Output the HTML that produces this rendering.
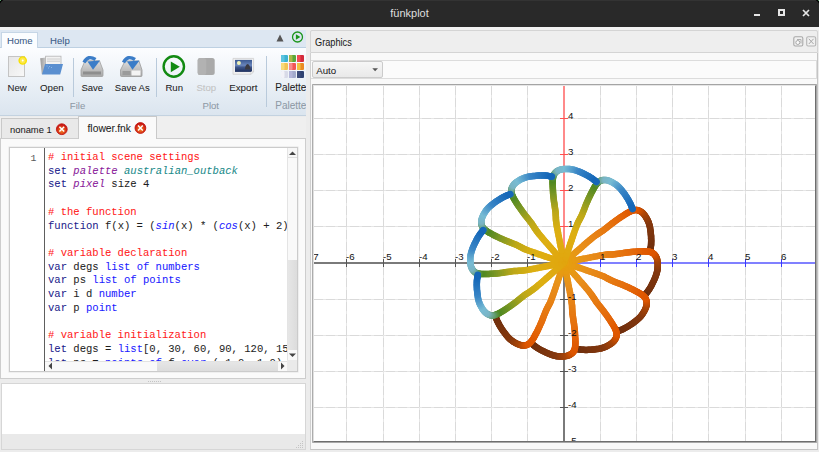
<!DOCTYPE html>
<html><head><meta charset="utf-8">
<style>
*{margin:0;padding:0;box-sizing:border-box}
html,body{width:819px;height:452px;overflow:hidden;background:#ececec;font-family:"Liberation Sans",sans-serif;position:relative}
.a{position:absolute}
.lbl{position:absolute;font-size:9.4px;color:#1c1c1c;-webkit-text-stroke:0.05px currentColor;line-height:11px;white-space:nowrap;transform-origin:0 0}
.code{position:absolute;font-family:"Liberation Mono",monospace;font-size:10.55px;line-height:13.7px;white-space:pre;color:#1e1e1e;-webkit-text-stroke:0.05px currentColor}
.c{color:#ff1a1a}.k{color:#1c1c8c}.i{font-style:italic;color:#8a1a9a}.t{font-style:italic;color:#1a8a8a}.b{color:#1a1aff}.bi{color:#1a1aff;font-style:italic}
</style></head><body>
<!-- title bar -->
<div class="a" style="left:0;top:0;width:819px;height:27px;background:#292929;border-top:1px solid #333"></div>
<svg class="a" style="left:0;top:0" width="4" height="4"><path d="M0 0H3.5Q1 1 0 3.5Z" fill="#000"/><rect width="1" height="1" fill="#5a9a6a"/></svg>
<svg class="a" style="left:815px;top:0" width="4" height="4"><path d="M4 0H0.5Q3 1 4 3.5Z" fill="#000"/><rect x="3" width="1" height="1" fill="#5a9a6a"/></svg>
<div class="a" style="left:0;top:7px;width:819px;text-align:center;color:#dfdfdf;font-size:11px;line-height:13px">fünkplot</div>
<div class="a" style="left:754px;top:14px;width:6px;height:2px;background:#e6e6e6"></div>
<div class="a" style="left:778px;top:9px;width:7px;height:7px;border:2px solid #e6e6e6"></div>
<svg class="a" style="left:802px;top:9px" width="8" height="8"><path d="M1 1L7 7M7 1L1 7" stroke="#e6e6e6" stroke-width="1.7"/></svg>
<div class="a" style="left:0;top:27px;width:819px;height:3px;background:#f2f2f2"></div>

<!-- ribbon -->
<div class="a" style="left:0;top:30px;width:306px;height:18px;background:#dde7f2;border-bottom:1px solid #bdd0e2"></div>
<div class="a" style="left:1px;top:32px;width:37px;height:16px;background:#fbfdff;border:1px solid #c6d6e6;border-bottom:none"></div>
<div class="lbl" style="left:7px;top:35px;color:#3a5a85;font-size:9.6px">Home</div>
<div class="lbl" style="left:50px;top:35px;color:#3a5a85;font-size:9.6px">Help</div>
<svg class="a" style="left:276px;top:34px" width="8" height="8"><path d="M4 0.5L7.5 7.5H0.5Z" fill="#555"/></svg>
<svg class="a" style="left:291px;top:31px" width="13" height="13"><circle cx="6.5" cy="6" r="5" fill="none" stroke="#1c961c" stroke-width="1.3"/><path d="M4.9 3.3L9.4 6L4.9 8.7Z" fill="#1c961c"/></svg>
<div class="a" style="left:0;top:48px;width:306px;height:68px;background:linear-gradient(#fcfdff 0%,#eef3f8 40%,#dbe5ef 100%);border-bottom:1px solid #c3d2e0"></div>
<!-- separators -->
<div class="a" style="left:73px;top:58px;width:1px;height:39px;background:#b9cadb"></div>
<div class="a" style="left:156px;top:58px;width:1px;height:39px;background:#b9cadb"></div>
<div class="a" style="left:266px;top:56px;width:1px;height:51px;background:#b9cadb"></div>
<!-- icons -->
<svg class="a" style="left:0;top:50px" width="306" height="32">
 <defs>
  <linearGradient id="pg" x1="0" y1="0" x2="1" y2="1"><stop offset="0" stop-color="#e6e6e6"/><stop offset="1" stop-color="#f8f8f8"/></linearGradient>
  <linearGradient id="dg" x1="0" y1="0" x2="0" y2="1"><stop offset="0" stop-color="#dcdcdc"/><stop offset="1" stop-color="#a8a8a8"/></linearGradient>
 </defs>
 <!-- New -->
 <rect x="8.5" y="6.5" width="16" height="20" fill="url(#pg)" stroke="#c4c4c4"/>
 <circle cx="22.7" cy="10.5" r="3.6" fill="#fde84a" stroke="#f6e000" stroke-width="1.4"/>
 <circle cx="22.7" cy="10.5" r="1" fill="#fff"/>
 <!-- Open -->
 <linearGradient id="og" x1="0" y1="0" x2="1" y2="0"><stop offset="0" stop-color="#9a9a9a"/><stop offset="1" stop-color="#d0d0d0"/></linearGradient>
 <path d="M40.2 8.2L46 7.5V23L41.8 24.2Z" fill="url(#og)"/>
 <rect x="45.6" y="6.2" width="15.4" height="9" fill="#f2f2f2" stroke="#b4b4b4" stroke-width="0.8"/>
 <path d="M47 9H60M47 11.2H60" stroke="#c4c4c4" stroke-width="0.8"/>
 <path d="M45 14H63L60.2 24.4H42Z" fill="#5a8fd0"/>
 <g fill="#8cb6e8"><rect x="46.5" y="15.5" width="1" height="1"/><rect x="49" y="16" width="1" height="1"/><rect x="48" y="17.5" width="1" height="1"/><rect x="51" y="17" width="1" height="1"/></g>
 <!-- Save -->
 <path d="M81 20L85 10.8H99.5L103 20V25.5Q103 26.5 102 26.5H82Q81 26.5 81 25.5Z" fill="url(#dg)" stroke="#a0a0a0" stroke-width="0.8"/>
 <rect x="83" y="21.5" width="18" height="3" fill="#8e8e8e"/>
 <path d="M84 12.5Q88 4.5 95.5 9.5" fill="none" stroke="#3b7dc8" stroke-width="3.4"/><path d="M87.5 11.5L100 10.5L93 19.8Z" fill="#3b7dc8"/>
 <!-- Save As -->
 <path d="M120.5 20L125 11H139L142 20V25.5Q142 26.5 141 26.5H121.5Q120.5 26.5 120.5 25.5Z" fill="url(#dg)" stroke="#9a9a9a" stroke-width="0.8"/>
 <rect x="122.5" y="21" width="8" height="4" fill="#9a9a9a"/>
 <rect x="131.5" y="20.5" width="9" height="5" fill="#f4f4f4"/>
 <path d="M123.5 12.5Q127.5 4.5 135 9.5" fill="none" stroke="#3b7dc8" stroke-width="3.4"/><path d="M127 11.5L139.5 10.5L132.5 19.8Z" fill="#3b7dc8"/>
 <!-- Run -->
 <circle cx="173.8" cy="16.5" r="10.2" fill="none" stroke="#128a12" stroke-width="2.4"/>
 <path d="M170.8 11.4L179.8 16.8L170.8 22.2Z" fill="#128a12"/>
 <!-- Stop -->
 <rect x="197.7" y="8" width="17" height="17" rx="2.5" fill="#a9a9a9"/>
 <rect x="197.7" y="8" width="8.5" height="17" rx="2.5" fill="#b2b2b2"/>
 <!-- Export -->
 <linearGradient id="eg" x1="0" y1="0" x2="0" y2="1"><stop offset="0" stop-color="#3a5890"/><stop offset="0.45" stop-color="#6a86bc"/><stop offset="0.62" stop-color="#3c5488"/><stop offset="1" stop-color="#1c2e5c"/></linearGradient>
 <path d="M233 8.4H253.6V22L251 24.3H233Z" fill="#f0f0f0" stroke="#cfcfcf" stroke-width="0.8"/>
 <rect x="235" y="9.9" width="17" height="12" fill="url(#eg)"/>
 <circle cx="238.9" cy="13" r="2" fill="#eef2b8"/>
 <path d="M245 19.5Q245 15 247.5 14Q250 14.5 250.5 19.5Z" fill="#3a3a42"/>
 <path d="M250 24.5L253.8 21.5L251 21.8Z" fill="#fff" stroke="#c8c8c8" stroke-width="0.5"/>
 <!-- Palette -->
 <g><rect x="281" y="5" width="7" height="7" rx="1" fill="#3ab2d2"/><rect x="281.0" y="5" width="3.5" height="7" rx="1" fill="#5cc4e0"/><rect x="289" y="5" width="7" height="7" rx="1" fill="#5aa83a"/><rect x="289.0" y="5" width="3.5" height="7" rx="1" fill="#a8b848"/><rect x="297" y="5" width="7" height="7" rx="1" fill="#d42a3c"/><rect x="297.0" y="5" width="3.5" height="7" rx="1" fill="#f24a52"/><rect x="281" y="13" width="7" height="7" rx="1" fill="#f2c455"/><rect x="281.0" y="13" width="3.5" height="7" rx="1" fill="#f8da7a"/><rect x="289" y="13" width="7" height="7" rx="1" fill="#f25656"/><rect x="289.0" y="13" width="3.5" height="7" rx="1" fill="#f98a8c"/><rect x="297" y="13" width="7" height="7" rx="1" fill="#ea8a22"/><rect x="297.0" y="13" width="3.5" height="7" rx="1" fill="#f2c242"/><rect x="281" y="21" width="7" height="7" rx="1" fill="#d8dae8"/><rect x="281.0" y="21" width="3.5" height="7" rx="1" fill="#f2f2f8"/><rect x="289" y="21" width="7" height="7" rx="1" fill="#a2aacc"/><rect x="289.0" y="21" width="3.5" height="7" rx="1" fill="#b4b6da"/><rect x="297" y="21" width="7" height="7" rx="1" fill="#304272"/><rect x="297.0" y="21" width="3.5" height="7" rx="1" fill="#3c4c7a"/></g>
</svg>
<!-- labels -->
<div class="lbl" style="left:7.5px;top:81.6px;font-size:9.6px">New</div>
<div class="lbl" style="left:40px;top:81.6px;font-size:9.7px">Open</div>
<div class="lbl" style="left:81.5px;top:81.6px;font-size:9.5px">Save</div>
<div class="lbl" style="left:114.8px;top:81.6px;font-size:9.5px">Save As</div>
<div class="lbl" style="left:165.4px;top:81.6px;font-size:9.6px">Run</div>
<div class="lbl" style="left:196.4px;top:81.6px;font-size:9.6px;color:#c2c2c2">Stop</div>
<div class="lbl" style="left:229.2px;top:81.6px;font-size:9.8px">Export</div>
<div class="lbl" style="left:275.3px;top:81.6px;font-size:10px">Palette</div>
<div class="lbl" style="left:69.8px;top:99.8px;font-size:9.6px;color:#8e99a5">File</div>
<div class="lbl" style="left:202.5px;top:99.8px;font-size:9.6px;color:#8e99a5">Plot</div>
<div class="lbl" style="left:275.3px;top:99.8px;font-size:10px;color:#8e99a5">Palette</div>
<div class="a" style="left:306px;top:30px;width:4px;height:90px;background:#ececec"></div>

<!-- editor tabs -->
<div class="a" style="left:0;top:117px;width:306px;height:22px;background:#efefef"></div>
<div class="a" style="left:1px;top:118px;width:78px;height:21px;background:#e9e9e9;border:1px solid #c9c9c9;border-bottom:none"></div>
<div class="a" style="left:0;top:138px;width:306px;height:241px;background:#fafafa;border:1px solid #cdcdcd"></div>
<div class="a" style="left:78px;top:116px;width:79px;height:23px;background:#fafafa;border:1px solid #c9c9c9;border-bottom:none"></div>
<div class="lbl" style="left:10px;top:124px">noname 1</div>
<div class="lbl" style="left:87.5px;top:122.6px;font-size:10.3px">flower.fnk</div>
<svg class="a" style="left:55px;top:123px" width="13" height="13"><defs><radialGradient id="xg" cx="0.5" cy="0.6" r="0.5"><stop offset="0" stop-color="#f48a2a"/><stop offset="0.6" stop-color="#e04a18"/><stop offset="1" stop-color="#c81414"/></radialGradient></defs><circle cx="6.8" cy="6.2" r="5.4" fill="url(#xg)" stroke="#c21a12" stroke-width="0.9"/><path d="M4.4 3.8L9.2 8.6M9.2 3.8L4.4 8.6" stroke="#fff" stroke-width="1.4"/></svg>
<svg class="a" style="left:134px;top:122px" width="13" height="13"><circle cx="6.4" cy="6" r="5.4" fill="url(#xg)" stroke="#c21a12" stroke-width="0.9"/><path d="M4 3.6L8.8 8.4M8.8 3.6L4 8.4" stroke="#fff" stroke-width="1.4"/></svg>

<!-- editor -->
<div class="a" style="left:9px;top:147px;width:289px;height:225px;background:#fff;border:1px solid #cbcbcb;box-shadow:0 0 0 0.5px #e4e4e4"></div>
<div class="a" style="left:44px;top:148px;width:1px;height:223px;background:#5e5e5e"></div>
<div class="code" style="left:30.6px;top:152px;color:#5a5a5a;-webkit-text-stroke:0;font-size:9.8px">1</div>
<div class="a" style="left:45px;top:148px;width:242px;height:213px;overflow:hidden">
<div class="code" style="left:3px;top:3px"><span class="c"># initial scene settings</span>
<span class="k">set</span> <span class="i">palette</span> <span class="t">australian_outback</span>
<span class="k">set</span> <span class="i">pixel</span> size 4

<span class="c"># the function</span>
<span class="k">function</span> f(x) = (<span class="bi">sin</span>(x) * (<span class="bi">cos</span>(x) + 2)) * 2

<span class="c"># variable declaration</span>
<span class="k">var</span> degs <span class="b">list of numbers</span>
<span class="k">var</span> ps <span class="b">list of points</span>
<span class="k">var</span> i d <span class="b">number</span>
<span class="k">var</span> p <span class="b">point</span>

<span class="c"># variable initialization</span>
<span class="k">let</span> degs = <span class="b">list</span>[0, 30, 60, 90, 120, 150, 180]
<span class="k">let</span> ps = <span class="b">points of</span> f <span class="b">over</span> (-1.0, 1.0)
</div></div>
<!-- v scrollbar -->
<div class="a" style="left:287px;top:148px;width:10px;height:212px;background:#f9f9f9;border-left:1px solid #e4e4e4"></div>
<div class="a" style="left:288px;top:148px;width:9px;height:10px;background:#f6f6f6;border-bottom:1px solid #dedede"></div>
<svg class="a" style="left:288px;top:150px" width="9" height="6"><path d="M1 5L4.5 1.5L8 5Z" fill="#444"/></svg>
<div class="a" style="left:288px;top:260px;width:9px;height:90px;background:linear-gradient(90deg,#e6e6e6,#dcdcdc)"></div>
<svg class="a" style="left:288px;top:352px" width="9" height="6"><path d="M1 1.5L4.5 5L8 1.5Z" fill="#444"/></svg>
<!-- h scrollbar -->
<div class="a" style="left:45px;top:361px;width:242px;height:10px;background:#f9f9f9;border-top:1px solid #e2e2e2"></div>
<div class="a" style="left:157px;top:362px;width:121px;height:9px;background:linear-gradient(#e6e6e6,#dcdcdc)"></div>
<svg class="a" style="left:46px;top:361px" width="8" height="10"><path d="M6 1.5L2.5 5L6 8.5Z" fill="#444"/></svg>
<svg class="a" style="left:279px;top:361px" width="8" height="10"><path d="M2 1.5L5.5 5L2 8.5Z" fill="#444"/></svg>
<div class="a" style="left:287px;top:360px;width:10px;height:11px;background:#eaeaea"></div>

<!-- splitter / output -->
<div class="a" style="left:0;top:379px;width:306px;height:4px;background:#ececec"></div>
<div class="a" style="left:1px;top:383px;width:305px;height:51px;background:#fff;border:1px solid #d6d6d6;border-bottom:none"></div>
<div class="a" style="left:1px;top:434px;width:305px;height:16px;background:#e9e9e9;border:1px solid #d6d6d6;border-top:none"></div>
<svg class="a" style="left:296px;top:441px" width="9" height="8"><g fill="#c4c4c4"><rect x="6" y="0" width="1" height="1"/><rect x="4" y="2" width="1" height="1"/><rect x="6" y="2" width="1" height="1"/><rect x="2" y="4" width="1" height="1"/><rect x="4" y="4" width="1" height="1"/><rect x="6" y="4" width="1" height="1"/><rect x="0" y="6" width="1" height="1"/><rect x="2" y="6" width="1" height="1"/><rect x="4" y="6" width="1" height="1"/><rect x="6" y="6" width="1" height="1"/></g></svg>
<svg class="a" style="left:148px;top:381px" width="13" height="1"><g fill="#c4c4c4"><rect x="0" y="0" width="1" height="1"/><rect x="2" y="0" width="1" height="1"/><rect x="4" y="0" width="1" height="1"/><rect x="6" y="0" width="1" height="1"/><rect x="8" y="0" width="1" height="1"/><rect x="10" y="0" width="1" height="1"/><rect x="12" y="0" width="1" height="1"/></g></svg>

<!-- graphics dock -->
<div class="a" style="left:310px;top:30px;width:508px;height:23px;background:#eeeeee;border:1px solid #d4d4d4;border-radius:2px 2px 0 0"></div>
<div class="lbl" style="left:314.6px;top:37px;font-size:10px;transform:scaleX(0.92)">Graphics</div>
<svg class="a" style="left:792px;top:35px" width="26" height="13"><rect x="1.8" y="1.8" width="9" height="9.2" rx="1.5" fill="#f0f0f0" stroke="#a8a8a8" stroke-width="1.1"/><path d="M5 4.5H9V8.5" fill="none" stroke="#b0b0b0"/><circle cx="5.8" cy="7.5" r="2" fill="#fafafa" stroke="#a0a0a0" stroke-width="0.9"/><rect x="14.7" y="1.8" width="9" height="9.2" rx="1.5" fill="#f0f0f0" stroke="#b4b4b4" stroke-width="1.1"/><path d="M16.8 3.8L21.6 9M21.6 3.8L16.8 9" stroke="#a8a8a8" stroke-width="1"/></svg>
<div class="a" style="left:310px;top:53px;width:508px;height:397px;background:#f9f9f9;border-left:1px solid #d0d0d0;border-right:1px solid #c4c4c4;border-bottom:1px solid #c4c4c4"></div>
<div class="a" style="left:311px;top:60px;width:506px;height:19px;border:1px solid #dcdcdc;border-left:none;background:#fbfbfb;border-radius:0 1px 1px 0"></div>
<div class="a" style="left:312px;top:61px;width:71px;height:17px;background:linear-gradient(#f6f6f6,#e9e9e9);border:1px solid #cbcbcb;border-radius:2px"></div>
<div class="lbl" style="left:316.2px;top:65px;font-size:9.7px">Auto</div>
<svg class="a" style="left:372px;top:68px" width="7" height="4"><path d="M0.3 0.3H6L3.15 3.3Z" fill="#555"/></svg>
<div class="a" style="left:312px;top:84px;width:505px;height:359px;background:#fff;border-top:1px solid #a4a4a4;border-left:1px solid #acacac;border-right:1px solid #a8a8a8;border-bottom:1px solid #a8a8a8;border-radius:1px"></div>
<div class="a" style="left:313px;top:85px;width:503px;height:357px;background:#fff;border-top:1px solid #e6e6e6;border-left:1px solid #e0e0e0;border-right:1px solid #6e6e6e;border-bottom:1px solid #6e6e6e"></div>
<svg class="a" style="left:0;top:0" width="819" height="452"><defs><clipPath id="pc"><rect x="314" y="86" width="501" height="355"/></clipPath></defs><g clip-path="url(#pc)"><path d="M346.5 86V441M383.5 86V441M419.5 86V441M455.5 86V441M491.5 86V441M527.5 86V441M564.5 86V441M600.5 86V441M636.5 86V441M672.5 86V441M708.5 86V441M745.5 86V441M781.5 86V441M314 407.5H815M314 371.5H815M314 335.5H815M314 299.5H815M314 262.5H815M314 226.5H815M314 190.5H815M314 154.5H815M314 118.5H815" stroke="#e6e6e6" stroke-width="1" fill="none"/><path d="M346.5 86V441M383.5 86V441M419.5 86V441M455.5 86V441M491.5 86V441M527.5 86V441M564.5 86V441M600.5 86V441M636.5 86V441M672.5 86V441M708.5 86V441M745.5 86V441M781.5 86V441M314 407.5H815M314 371.5H815M314 335.5H815M314 299.5H815M314 262.5H815M314 226.5H815M314 190.5H815M314 154.5H815M314 118.5H815" stroke="#dadada" stroke-width="1" stroke-dasharray="9 3" fill="none"/><rect x="314" y="262" width="250" height="2" fill="#7a7a7a"/><rect x="564" y="262" width="251" height="2" fill="#8080ff"/><rect x="563" y="86" width="2" height="176" fill="#ff8a8a"/><rect x="563" y="262" width="2" height="179" fill="#7a7a7a"/><g stroke-width="6.5" stroke-linecap="round" fill="none"><path d="M645.1 294.8L644.7 295.3" stroke="#6c2e0e"/><path d="M618.2 331.0L617.6 331.3" stroke="#6c2e0e"/><path d="M650.3 249.9L650.2 250.6" stroke="#6c2e0e"/><path d="M495.7 316.9L495.4 316.3" stroke="#6c2e0e"/><path d="M576.8 349.0L576.1 348.9" stroke="#6c2e0e"/><path d="M531.9 343.8L531.4 343.4" stroke="#6c2e0e"/><path d="M619.1 330.7L618.2 331.0" stroke="#6d2e0e"/><path d="M645.7 294.1L645.1 294.8" stroke="#6d2e0e"/><path d="M650.4 249.0L650.3 249.9" stroke="#6d2e0e"/><path d="M496.0 317.8L495.7 316.9" stroke="#6d2e0e"/><path d="M577.7 349.1L576.8 349.0" stroke="#6d2e0e"/><path d="M532.6 344.4L531.9 343.8" stroke="#6d2e0e"/><path d="M646.4 293.2L645.7 294.1" stroke="#6e2f0e"/><path d="M650.6 248.0L650.4 249.0" stroke="#6e2f0e"/><path d="M620.1 330.3L619.1 330.7" stroke="#6e2f0e"/><path d="M578.7 349.3L577.7 349.1" stroke="#6e2f0e"/><path d="M496.4 318.8L496.0 317.8" stroke="#6e2f0e"/><path d="M533.5 345.1L532.6 344.4" stroke="#6e2f0e"/><path d="M621.2 329.9L620.1 330.3" stroke="#6f2f0e"/><path d="M647.1 292.3L646.4 293.2" stroke="#6f2f0e"/><path d="M650.8 246.8L650.6 248.0" stroke="#6f2f0e"/><path d="M496.8 319.9L496.4 318.8" stroke="#6f2f0e"/><path d="M534.4 345.8L533.5 345.1" stroke="#6f2f0e"/><path d="M579.9 349.5L578.7 349.3" stroke="#6f2f0e"/><path d="M647.9 291.3L647.1 292.3" stroke="#70300e"/><path d="M622.4 329.4L621.2 329.9" stroke="#70300e"/><path d="M651.0 245.5L650.8 246.8" stroke="#70300e"/><path d="M497.3 321.1L496.8 319.9" stroke="#70300e"/><path d="M535.4 346.6L534.4 345.8" stroke="#70300e"/><path d="M581.2 349.7L579.9 349.5" stroke="#70300e"/><path d="M648.6 290.2L647.9 291.3" stroke="#71300e"/><path d="M623.6 328.8L622.4 329.4" stroke="#71300e"/><path d="M651.1 244.2L651.0 245.5" stroke="#71300e"/><path d="M536.5 347.3L535.4 346.6" stroke="#71300e"/><path d="M582.5 349.8L581.2 349.7" stroke="#71300e"/><path d="M497.9 322.3L497.3 321.1" stroke="#71300e"/><path d="M649.4 289.1L648.6 290.2" stroke="#72300e"/><path d="M651.1 242.9L651.1 244.2" stroke="#72300e"/><path d="M624.7 328.2L623.6 328.8" stroke="#72300e"/><path d="M583.8 349.8L582.5 349.8" stroke="#72300e"/><path d="M498.5 323.4L497.9 322.3" stroke="#72300e"/><path d="M537.6 348.1L536.5 347.3" stroke="#72300e"/><path d="M650.1 287.9L649.4 289.1" stroke="#73310e"/><path d="M626.0 327.5L624.7 328.2" stroke="#73310e"/><path d="M651.2 241.4L651.1 242.9" stroke="#73310e"/><path d="M585.3 349.9L583.8 349.8" stroke="#73310e"/><path d="M499.2 324.7L498.5 323.4" stroke="#73310e"/><path d="M538.8 348.8L537.6 348.1" stroke="#73310e"/><path d="M627.3 326.8L626.0 327.5" stroke="#74310e"/><path d="M650.9 286.6L650.1 287.9" stroke="#74310e"/><path d="M586.8 349.9L585.3 349.9" stroke="#74310e"/><path d="M651.2 239.9L651.2 241.4" stroke="#74310e"/><path d="M499.9 326.0L499.2 324.7" stroke="#74310e"/><path d="M540.1 349.6L538.8 348.8" stroke="#74310e"/><path d="M628.6 326.0L627.3 326.8" stroke="#75320e"/><path d="M500.7 327.3L499.9 326.0" stroke="#75320e"/><path d="M541.5 350.3L540.1 349.6" stroke="#75320e"/><path d="M651.1 238.4L651.2 239.9" stroke="#75320e"/><path d="M588.3 349.8L586.8 349.9" stroke="#75320e"/><path d="M651.6 285.2L650.9 286.6" stroke="#75320e"/><path d="M501.5 328.6L500.7 327.3" stroke="#76320e"/><path d="M652.3 283.8L651.6 285.2" stroke="#76320e"/><path d="M629.9 325.2L628.6 326.0" stroke="#76320e"/><path d="M651.1 236.8L651.1 238.4" stroke="#76320e"/><path d="M589.9 349.8L588.3 349.8" stroke="#76320e"/><path d="M542.9 351.0L541.5 350.3" stroke="#76320e"/><path d="M502.4 329.9L501.5 328.6" stroke="#78330e"/><path d="M653.0 282.4L652.3 283.8" stroke="#78330e"/><path d="M651.0 235.3L651.1 236.8" stroke="#78330e"/><path d="M631.2 324.3L629.9 325.2" stroke="#78330e"/><path d="M591.4 349.7L589.9 349.8" stroke="#78330e"/><path d="M544.3 351.7L542.9 351.0" stroke="#78330e"/><path d="M503.3 331.3L502.4 329.9" stroke="#79330e"/><path d="M632.6 323.4L631.2 324.3" stroke="#79330e"/><path d="M653.7 281.0L653.0 282.4" stroke="#79330e"/><path d="M593.0 349.5L591.4 349.7" stroke="#79330e"/><path d="M650.8 233.7L651.0 235.3" stroke="#79330e"/><path d="M545.7 352.4L544.3 351.7" stroke="#79330e"/><path d="M504.3 332.6L503.3 331.3" stroke="#7a340e"/><path d="M654.4 279.4L653.7 281.0" stroke="#7a340e"/><path d="M633.9 322.4L632.6 323.4" stroke="#7a340e"/><path d="M650.7 232.0L650.8 233.7" stroke="#7a340e"/><path d="M594.7 349.4L593.0 349.5" stroke="#7a340e"/><path d="M547.3 353.1L545.7 352.4" stroke="#7a340e"/><path d="M505.4 334.0L504.3 332.6" stroke="#7c340e"/><path d="M635.3 321.3L633.9 322.4" stroke="#7c340e"/><path d="M655.1 277.8L654.4 279.4" stroke="#7c340e"/><path d="M596.4 349.1L594.7 349.4" stroke="#7c340e"/><path d="M650.4 230.3L650.7 232.0" stroke="#7c340e"/><path d="M548.9 353.8L547.3 353.1" stroke="#7c340e"/><path d="M506.4 335.3L505.4 334.0" stroke="#7d350e"/><path d="M636.6 320.3L635.3 321.3" stroke="#7d350e"/><path d="M598.1 348.9L596.4 349.1" stroke="#7d350e"/><path d="M550.5 354.4L548.9 353.8" stroke="#7d350e"/><path d="M655.7 276.2L655.1 277.8" stroke="#7d350e"/><path d="M650.2 228.6L650.4 230.3" stroke="#7d350e"/><path d="M637.9 319.2L636.6 320.3" stroke="#7e360e"/><path d="M507.5 336.6L506.4 335.3" stroke="#7e360e"/><path d="M656.2 274.7L655.7 276.2" stroke="#7e360e"/><path d="M599.7 348.6L598.1 348.9" stroke="#7e360e"/><path d="M649.9 227.0L650.2 228.6" stroke="#7e360e"/><path d="M552.0 354.9L550.5 354.4" stroke="#7e360e"/><path d="M508.5 337.7L507.5 336.6" stroke="#80360e"/><path d="M656.7 273.3L656.2 274.7" stroke="#80360e"/><path d="M639.0 318.2L637.9 319.2" stroke="#80360e"/><path d="M649.6 225.5L649.9 227.0" stroke="#80360e"/><path d="M553.4 355.4L552.0 354.9" stroke="#80360e"/><path d="M601.2 348.3L599.7 348.6" stroke="#80360e"/><path d="M657.0 271.9L656.7 273.3" stroke="#81370e"/><path d="M509.5 338.7L508.5 337.7" stroke="#81370e"/><path d="M649.2 224.2L649.6 225.5" stroke="#81370e"/><path d="M640.0 317.2L639.0 318.2" stroke="#81370e"/><path d="M554.8 355.7L553.4 355.4" stroke="#81370e"/><path d="M602.5 347.9L601.2 348.3" stroke="#81370e"/><path d="M657.3 270.7L657.0 271.9" stroke="#82370e"/><path d="M640.8 316.3L640.0 317.2" stroke="#82370e"/><path d="M648.8 223.0L649.2 224.2" stroke="#82370e"/><path d="M510.4 339.5L509.5 338.7" stroke="#82370e"/><path d="M603.7 347.5L602.5 347.9" stroke="#82370e"/><path d="M556.0 356.0L554.8 355.7" stroke="#82370e"/><path d="M641.6 315.3L640.8 316.3" stroke="#83370e"/><path d="M657.5 269.5L657.3 270.7" stroke="#83370e"/><path d="M511.4 340.3L510.4 339.5" stroke="#83370e"/><path d="M648.4 221.8L648.8 223.0" stroke="#83370e"/><path d="M604.9 347.1L603.7 347.5" stroke="#83370e"/><path d="M557.2 356.2L556.0 356.0" stroke="#83370e"/><path d="M642.3 314.4L641.6 315.3" stroke="#84380e"/><path d="M657.6 268.3L657.5 269.5" stroke="#84380e"/><path d="M647.9 220.8L648.4 221.8" stroke="#84380e"/><path d="M605.9 346.6L604.9 347.1" stroke="#84380e"/><path d="M512.3 341.0L511.4 340.3" stroke="#84380e"/><path d="M558.4 356.3L557.2 356.2" stroke="#84380e"/><path d="M642.9 313.4L642.3 314.4" stroke="#87390e"/><path d="M657.7 267.2L657.6 268.3" stroke="#87390e"/><path d="M607.0 346.1L605.9 346.6" stroke="#87390e"/><path d="M647.4 219.7L647.9 220.8" stroke="#87390e"/><path d="M513.3 341.6L512.3 341.0" stroke="#87390e"/><path d="M559.5 356.4L558.4 356.3" stroke="#87390e"/><path d="M643.5 312.4L642.9 313.4" stroke="#8b3a0d"/><path d="M657.7 266.0L657.7 267.2" stroke="#8b3a0d"/><path d="M646.8 218.7L647.4 219.7" stroke="#8b3a0d"/><path d="M608.0 345.5L607.0 346.1" stroke="#8b3a0d"/><path d="M514.3 342.2L513.3 341.6" stroke="#8b3a0d"/><path d="M560.7 356.4L559.5 356.4" stroke="#8b3a0d"/><path d="M644.2 311.3L643.5 312.4" stroke="#8f3c0c"/><path d="M657.7 264.7L657.7 266.0" stroke="#8f3c0c"/><path d="M646.2 217.6L646.8 218.7" stroke="#8f3c0c"/><path d="M609.1 344.9L608.0 345.5" stroke="#8f3c0c"/><path d="M515.4 342.9L514.3 342.2" stroke="#8f3c0c"/><path d="M562.0 356.4L560.7 356.4" stroke="#8f3c0c"/><path d="M644.8 310.2L644.2 311.3" stroke="#943d0b"/><path d="M645.5 216.5L646.2 217.6" stroke="#943d0b"/><path d="M657.7 263.4L657.7 264.7" stroke="#943d0b"/><path d="M563.3 356.4L562.0 356.4" stroke="#943d0b"/><path d="M516.5 343.5L515.4 342.9" stroke="#943d0b"/><path d="M610.2 344.2L609.1 344.9" stroke="#943d0b"/><path d="M645.3 309.0L644.8 310.2" stroke="#983f0a"/><path d="M644.8 215.4L645.5 216.5" stroke="#983f0a"/><path d="M657.6 262.2L657.7 263.4" stroke="#983f0a"/><path d="M564.5 356.3L563.3 356.4" stroke="#983f0a"/><path d="M517.7 344.0L516.5 343.5" stroke="#983f0a"/><path d="M611.3 343.5L610.2 344.2" stroke="#983f0a"/><path d="M657.4 260.9L657.6 262.2" stroke="#9d410a"/><path d="M645.8 307.9L645.3 309.0" stroke="#9d410a"/><path d="M644.0 214.4L644.8 215.4" stroke="#9d410a"/><path d="M565.8 356.1L564.5 356.3" stroke="#9d410a"/><path d="M518.8 344.5L517.7 344.0" stroke="#9d410a"/><path d="M612.3 342.7L611.3 343.5" stroke="#9d410a"/><path d="M567.0 355.9L565.8 356.1" stroke="#a14209"/><path d="M657.2 259.7L657.4 260.9" stroke="#a14209"/><path d="M646.2 306.7L645.8 307.9" stroke="#a14209"/><path d="M643.2 213.5L644.0 214.4" stroke="#a14209"/><path d="M613.2 341.9L612.3 342.7" stroke="#a14209"/><path d="M520.0 344.9L518.8 344.5" stroke="#a14209"/><path d="M568.1 355.6L567.0 355.9" stroke="#a54408"/><path d="M656.9 258.6L657.2 259.7" stroke="#a54408"/><path d="M642.4 212.7L643.2 213.5" stroke="#a54408"/><path d="M521.1 345.2L520.0 344.9" stroke="#a54408"/><path d="M614.0 341.1L613.2 341.9" stroke="#a54408"/><path d="M646.5 305.6L646.2 306.7" stroke="#a54408"/><path d="M641.6 212.1L642.4 212.7" stroke="#ac4607"/><path d="M522.1 345.4L521.1 345.2" stroke="#ac4607"/><path d="M569.1 355.2L568.1 355.6" stroke="#ac4607"/><path d="M656.5 257.6L656.9 258.6" stroke="#ac4607"/><path d="M646.7 304.6L646.5 305.6" stroke="#ac4607"/><path d="M614.6 340.3L614.0 341.1" stroke="#ac4607"/><path d="M640.7 211.5L641.6 212.1" stroke="#b34806"/><path d="M570.0 354.7L569.1 355.2" stroke="#b34806"/><path d="M656.0 256.7L656.5 257.6" stroke="#b34806"/><path d="M523.2 345.4L522.1 345.4" stroke="#b34806"/><path d="M646.7 303.5L646.7 304.6" stroke="#b34806"/><path d="M615.2 339.4L614.6 340.3" stroke="#b34806"/><path d="M639.8 211.0L640.7 211.5" stroke="#ba4a05"/><path d="M570.9 354.2L570.0 354.7" stroke="#ba4a05"/><path d="M646.7 302.5L646.7 303.5" stroke="#ba4a05"/><path d="M655.5 255.8L656.0 256.7" stroke="#ba4a05"/><path d="M615.7 338.5L615.2 339.4" stroke="#ba4a05"/><path d="M524.2 345.4L523.2 345.4" stroke="#ba4a05"/><path d="M638.9 210.6L639.8 211.0" stroke="#c14d04"/><path d="M654.9 255.0L655.5 255.8" stroke="#c14d04"/><path d="M571.7 353.6L570.9 354.2" stroke="#c14d04"/><path d="M616.1 337.6L615.7 338.5" stroke="#c14d04"/><path d="M646.6 301.5L646.7 302.5" stroke="#c14d04"/><path d="M525.2 345.3L524.2 345.4" stroke="#c14d04"/><path d="M654.2 254.2L654.9 255.0" stroke="#c84f03"/><path d="M526.2 345.1L525.2 345.3" stroke="#c84f03"/><path d="M572.5 352.9L571.7 353.6" stroke="#c84f03"/><path d="M616.4 336.6L616.1 337.6" stroke="#c84f03"/><path d="M637.9 210.3L638.9 210.6" stroke="#c84f03"/><path d="M646.4 300.5L646.6 301.5" stroke="#c84f03"/><path d="M653.5 253.6L654.2 254.2" stroke="#cf5102"/><path d="M573.1 352.2L572.5 352.9" stroke="#cf5102"/><path d="M616.6 335.7L616.4 336.6" stroke="#cf5102"/><path d="M527.1 344.8L526.2 345.1" stroke="#cf5102"/><path d="M646.1 299.6L646.4 300.5" stroke="#cf5102"/><path d="M637.0 210.1L637.9 210.3" stroke="#cf5102"/><path d="M645.7 298.8L646.1 299.6" stroke="#d55301"/><path d="M573.6 351.5L573.1 352.2" stroke="#d55301"/><path d="M652.8 253.1L653.5 253.6" stroke="#d55301"/><path d="M616.7 334.8L616.6 335.7" stroke="#d55301"/><path d="M636.1 210.0L637.0 210.1" stroke="#d55301"/><path d="M527.9 344.4L527.1 344.8" stroke="#d55301"/><path d="M645.3 298.0L645.7 298.8" stroke="#db5500"/><path d="M574.1 350.8L573.6 351.5" stroke="#db5500"/><path d="M652.1 252.6L652.8 253.1" stroke="#db5500"/><path d="M635.2 210.0L636.1 210.0" stroke="#db5500"/><path d="M616.7 333.9L616.7 334.8" stroke="#db5500"/><path d="M528.7 344.0L527.9 344.4" stroke="#db5500"/><path d="M574.4 350.0L574.1 350.8" stroke="#de5600"/><path d="M651.3 252.3L652.1 252.6" stroke="#de5600"/><path d="M634.4 210.1L635.2 210.0" stroke="#de5600"/><path d="M616.6 333.1L616.7 333.9" stroke="#de5600"/><path d="M644.8 297.3L645.3 298.0" stroke="#de5600"/><path d="M529.4 343.5L528.7 344.0" stroke="#de5600"/><path d="M574.7 349.1L574.4 350.0" stroke="#de5700"/><path d="M650.4 252.0L651.3 252.3" stroke="#de5700"/><path d="M633.5 210.3L634.4 210.1" stroke="#de5700"/><path d="M616.4 332.2L616.6 333.1" stroke="#de5700"/><path d="M644.1 296.6L644.8 297.3" stroke="#de5700"/><path d="M530.1 342.8L529.4 343.5" stroke="#de5700"/><path d="M649.4 251.8L650.4 252.0" stroke="#de5700"/><path d="M574.9 348.1L574.7 349.1" stroke="#de5700"/><path d="M643.4 296.0L644.1 296.6" stroke="#de5700"/><path d="M616.1 331.2L616.4 332.2" stroke="#de5700"/><path d="M530.7 342.1L530.1 342.8" stroke="#de5700"/><path d="M632.5 210.6L633.5 210.3" stroke="#de5700"/><path d="M642.5 295.2L643.4 296.0" stroke="#df5701"/><path d="M648.3 251.6L649.4 251.8" stroke="#df5701"/><path d="M575.1 347.0L574.9 348.1" stroke="#df5701"/><path d="M615.7 330.1L616.1 331.2" stroke="#df5701"/><path d="M531.5 341.2L530.7 342.1" stroke="#df5701"/><path d="M631.4 211.0L632.5 210.6" stroke="#df5701"/><path d="M575.2 345.7L575.1 347.0" stroke="#df5801"/><path d="M647.0 251.5L648.3 251.6" stroke="#df5801"/><path d="M532.2 340.2L531.5 341.2" stroke="#df5801"/><path d="M615.2 329.0L615.7 330.1" stroke="#df5801"/><path d="M641.5 294.5L642.5 295.2" stroke="#df5801"/><path d="M630.3 211.5L631.4 211.0" stroke="#df5801"/><path d="M533.0 339.1L532.2 340.2" stroke="#df5801"/><path d="M575.3 344.3L575.2 345.7" stroke="#df5801"/><path d="M645.6 251.4L647.0 251.5" stroke="#df5801"/><path d="M614.6 327.7L615.2 329.0" stroke="#df5801"/><path d="M640.4 293.7L641.5 294.5" stroke="#df5801"/><path d="M629.0 212.1L630.3 211.5" stroke="#df5801"/><path d="M533.8 337.8L533.0 339.1" stroke="#e05902"/><path d="M644.1 251.3L645.6 251.4" stroke="#e05902"/><path d="M575.4 342.8L575.3 344.3" stroke="#e05902"/><path d="M639.1 292.9L640.4 293.7" stroke="#e05902"/><path d="M613.9 326.4L614.6 327.7" stroke="#e05902"/><path d="M627.7 212.8L629.0 212.1" stroke="#e05902"/><path d="M534.5 336.4L533.8 337.8" stroke="#e05a02"/><path d="M642.6 251.4L644.1 251.3" stroke="#e05a02"/><path d="M575.3 341.3L575.4 342.8" stroke="#e05a02"/><path d="M613.1 325.1L613.9 326.4" stroke="#e05a02"/><path d="M637.7 292.2L639.1 292.9" stroke="#e05a02"/><path d="M626.4 213.6L627.7 212.8" stroke="#e05a02"/><path d="M640.9 251.4L642.6 251.4" stroke="#e05b03"/><path d="M612.2 323.6L613.1 325.1" stroke="#e05b03"/><path d="M535.3 334.9L534.5 336.4" stroke="#e05b03"/><path d="M636.2 291.4L637.7 292.2" stroke="#e05b03"/><path d="M624.9 214.5L626.4 213.6" stroke="#e05b03"/><path d="M575.3 339.6L575.3 341.3" stroke="#e05b03"/><path d="M639.2 251.5L640.9 251.4" stroke="#e15d04"/><path d="M634.7 290.6L636.2 291.4" stroke="#e15d04"/><path d="M611.3 322.2L612.2 323.6" stroke="#e15d04"/><path d="M536.1 333.4L535.3 334.9" stroke="#e15d04"/><path d="M575.2 337.9L575.3 339.6" stroke="#e15d04"/><path d="M623.5 215.4L624.9 214.5" stroke="#e15d04"/><path d="M610.3 320.6L611.3 322.2" stroke="#e26005"/><path d="M537.0 331.8L536.1 333.4" stroke="#e26005"/><path d="M575.1 336.0L575.2 337.9" stroke="#e26005"/><path d="M637.3 251.6L639.2 251.5" stroke="#e26005"/><path d="M621.9 216.4L623.5 215.4" stroke="#e26005"/><path d="M633.1 289.7L634.7 290.6" stroke="#e26005"/><path d="M609.2 319.0L610.3 320.6" stroke="#e26207"/><path d="M575.0 334.1L575.1 336.0" stroke="#e26207"/><path d="M537.8 330.1L537.0 331.8" stroke="#e26207"/><path d="M635.4 251.7L637.3 251.6" stroke="#e26207"/><path d="M620.3 217.5L621.9 216.4" stroke="#e26207"/><path d="M631.4 288.9L633.1 289.7" stroke="#e26207"/><path d="M608.1 317.4L609.2 319.0" stroke="#e36408"/><path d="M629.5 288.0L631.4 288.9" stroke="#e36408"/><path d="M538.7 328.2L537.8 330.1" stroke="#e36408"/><path d="M574.9 332.1L575.0 334.1" stroke="#e36408"/><path d="M633.4 251.8L635.4 251.7" stroke="#e36408"/><path d="M618.7 218.6L620.3 217.5" stroke="#e36408"/><path d="M627.7 287.1L629.5 288.0" stroke="#e46709"/><path d="M606.9 315.7L608.1 317.4" stroke="#e46709"/><path d="M574.7 330.0L574.9 332.1" stroke="#e46709"/><path d="M539.6 326.4L538.7 328.2" stroke="#e46709"/><path d="M617.0 219.8L618.7 218.6" stroke="#e46709"/><path d="M631.3 252.0L633.4 251.8" stroke="#e46709"/><path d="M605.7 314.0L606.9 315.7" stroke="#e4690b"/><path d="M574.5 328.0L574.7 330.0" stroke="#e4690b"/><path d="M625.7 286.3L627.7 287.1" stroke="#e4690b"/><path d="M540.4 324.4L539.6 326.4" stroke="#e4690b"/><path d="M629.3 252.2L631.3 252.0" stroke="#e4690b"/><path d="M615.3 221.0L617.0 219.8" stroke="#e4690b"/><path d="M604.4 312.3L605.7 314.0" stroke="#e46b0b"/><path d="M574.2 325.9L574.5 328.0" stroke="#e46b0b"/><path d="M623.8 285.4L625.7 286.3" stroke="#e46b0b"/><path d="M541.3 322.5L540.4 324.4" stroke="#e46b0b"/><path d="M627.2 252.5L629.3 252.2" stroke="#e46b0b"/><path d="M613.6 222.3L615.3 221.0" stroke="#e46b0b"/><path d="M621.9 284.6L623.8 285.4" stroke="#e56d0c"/><path d="M603.2 310.6L604.4 312.3" stroke="#e56d0c"/><path d="M611.9 223.5L613.6 222.3" stroke="#e56d0c"/><path d="M574.0 323.8L574.2 325.9" stroke="#e56d0c"/><path d="M542.1 320.6L541.3 322.5" stroke="#e56d0c"/><path d="M625.1 252.7L627.2 252.5" stroke="#e56d0c"/><path d="M610.2 224.9L611.9 223.5" stroke="#e56f0d"/><path d="M573.6 321.6L574.0 323.8" stroke="#e56f0d"/><path d="M601.8 308.9L603.2 310.6" stroke="#e56f0d"/><path d="M619.8 283.8L621.9 284.6" stroke="#e56f0d"/><path d="M542.9 318.5L542.1 320.6" stroke="#e56f0d"/><path d="M622.9 253.1L625.1 252.7" stroke="#e56f0d"/><path d="M573.3 319.4L573.6 321.6" stroke="#e5710e"/><path d="M617.7 283.0L619.8 283.8" stroke="#e5710e"/><path d="M608.4 226.3L610.2 224.9" stroke="#e5710e"/><path d="M600.4 307.1L601.8 308.9" stroke="#e5710e"/><path d="M543.7 316.4L542.9 318.5" stroke="#e5710e"/><path d="M620.7 253.4L622.9 253.1" stroke="#e5710e"/><path d="M599.0 305.4L600.4 307.1" stroke="#e5730f"/><path d="M615.7 282.2L617.7 283.0" stroke="#e5730f"/><path d="M573.0 317.2L573.3 319.4" stroke="#e5730f"/><path d="M544.5 314.4L543.7 316.4" stroke="#e5730f"/><path d="M618.5 253.7L620.7 253.4" stroke="#e5730f"/><path d="M606.7 227.7L608.4 226.3" stroke="#e5730f"/><path d="M597.7 303.7L599.0 305.4" stroke="#e57510"/><path d="M605.0 229.0L606.7 227.7" stroke="#e57510"/><path d="M572.7 315.1L573.0 317.2" stroke="#e57510"/><path d="M613.7 281.4L615.7 282.2" stroke="#e57510"/><path d="M616.4 254.0L618.5 253.7" stroke="#e57510"/><path d="M545.3 312.4L544.5 314.4" stroke="#e57510"/><path d="M603.4 230.3L605.0 229.0" stroke="#e67610"/><path d="M596.4 302.1L597.7 303.7" stroke="#e67610"/><path d="M572.4 313.0L572.7 315.1" stroke="#e67610"/><path d="M614.3 254.3L616.4 254.0" stroke="#e67610"/><path d="M611.8 280.6L613.7 281.4" stroke="#e67610"/><path d="M546.1 310.5L545.3 312.4" stroke="#e67610"/><path d="M610.1 279.8L611.8 280.6" stroke="#e67811"/><path d="M612.5 254.4L614.3 254.3" stroke="#e67811"/><path d="M601.8 231.3L603.4 230.3" stroke="#e67811"/><path d="M572.3 311.2L572.4 313.0" stroke="#e67811"/><path d="M595.4 300.5L596.4 302.1" stroke="#e67811"/><path d="M546.9 308.8L546.1 310.5" stroke="#e67811"/><path d="M600.4 232.2L601.8 231.3" stroke="#e67a12"/><path d="M608.6 279.0L610.1 279.8" stroke="#e67a12"/><path d="M610.8 254.5L612.5 254.4" stroke="#e67a12"/><path d="M572.2 309.5L572.3 311.2" stroke="#e67a12"/><path d="M547.7 307.3L546.9 308.8" stroke="#e67a12"/><path d="M594.5 299.1L595.4 300.5" stroke="#e67a12"/><path d="M599.1 233.0L600.4 232.2" stroke="#e67b12"/><path d="M609.2 254.6L610.8 254.5" stroke="#e67b12"/><path d="M572.1 307.9L572.2 309.5" stroke="#e67b12"/><path d="M593.7 297.8L594.5 299.1" stroke="#e67b12"/><path d="M548.4 305.9L547.7 307.3" stroke="#e67b12"/><path d="M607.2 278.3L608.6 279.0" stroke="#e67b12"/><path d="M597.7 234.0L599.1 233.0" stroke="#e67c13"/><path d="M607.5 254.6L609.2 254.6" stroke="#e67c13"/><path d="M592.7 296.4L593.7 297.8" stroke="#e67c13"/><path d="M605.7 277.5L607.2 278.3" stroke="#e67c13"/><path d="M572.1 306.2L572.1 307.9" stroke="#e67c13"/><path d="M549.2 304.4L548.4 305.9" stroke="#e67c13"/><path d="M605.6 254.8L607.5 254.6" stroke="#e67e13"/><path d="M591.6 294.8L592.7 296.4" stroke="#e67e13"/><path d="M596.1 235.1L597.7 234.0" stroke="#e67e13"/><path d="M604.0 276.6L605.7 277.5" stroke="#e67e13"/><path d="M571.9 304.3L572.1 306.2" stroke="#e67e13"/><path d="M550.1 302.7L549.2 304.4" stroke="#e67e13"/><path d="M603.3 255.1L605.6 254.8" stroke="#e67f14"/><path d="M590.2 292.9L591.6 294.8" stroke="#e67f14"/><path d="M601.8 275.7L604.0 276.6" stroke="#e67f14"/><path d="M551.0 300.5L550.1 302.7" stroke="#e67f14"/><path d="M571.6 302.0L571.9 304.3" stroke="#e67f14"/><path d="M594.2 236.5L596.1 235.1" stroke="#e67f14"/><path d="M599.2 274.7L601.8 275.7" stroke="#e78215"/><path d="M600.5 255.5L603.3 255.1" stroke="#e78215"/><path d="M592.0 238.2L594.2 236.5" stroke="#e78215"/><path d="M571.2 299.2L571.6 302.0" stroke="#e78215"/><path d="M588.5 290.7L590.2 292.9" stroke="#e78215"/><path d="M552.0 297.9L551.0 300.5" stroke="#e78215"/><path d="M596.2 273.6L599.2 274.7" stroke="#e78416"/><path d="M597.3 256.1L600.5 255.5" stroke="#e78416"/><path d="M589.6 240.3L592.0 238.2" stroke="#e78416"/><path d="M570.6 296.0L571.2 299.2" stroke="#e78416"/><path d="M586.4 288.3L588.5 290.7" stroke="#e78416"/><path d="M553.1 294.9L552.0 297.9" stroke="#e78416"/><path d="M593.0 272.5L596.2 273.6" stroke="#e78717"/><path d="M594.0 256.7L597.3 256.1" stroke="#e78717"/><path d="M586.9 242.5L589.6 240.3" stroke="#e78717"/><path d="M570.0 292.7L570.6 296.0" stroke="#e78717"/><path d="M584.2 285.6L586.4 288.3" stroke="#e78717"/><path d="M554.2 291.7L553.1 294.9" stroke="#e78717"/><path d="M589.6 271.3L593.0 272.5" stroke="#e78918"/><path d="M590.5 257.4L594.0 256.7" stroke="#e78918"/><path d="M569.3 289.2L570.0 292.7" stroke="#e78918"/><path d="M581.9 283.0L584.2 285.6" stroke="#e78918"/><path d="M584.3 244.8L586.9 242.5" stroke="#e78918"/><path d="M555.4 288.3L554.2 291.7" stroke="#e78918"/><path d="M587.0 258.1L590.5 257.4" stroke="#e88c19"/><path d="M568.6 285.7L569.3 289.2" stroke="#e88c19"/><path d="M579.5 280.3L581.9 283.0" stroke="#e88c19"/><path d="M586.2 270.2L589.6 271.3" stroke="#e88c19"/><path d="M556.5 284.9L555.4 288.3" stroke="#e88c19"/><path d="M581.6 247.2L584.3 244.8" stroke="#e88c19"/><path d="M583.0 269.0L586.2 270.2" stroke="#e88f1a"/><path d="M568.0 282.3L568.6 285.7" stroke="#e88f1a"/><path d="M577.3 277.7L579.5 280.3" stroke="#e88f1a"/><path d="M583.6 258.7L587.0 258.1" stroke="#e88f1a"/><path d="M557.7 281.7L556.5 284.9" stroke="#e88f1a"/><path d="M579.0 249.4L581.6 247.2" stroke="#e88f1a"/><path d="M574.9 275.0L577.3 277.7" stroke="#e89219"/><path d="M567.3 278.8L568.0 282.3" stroke="#e89219"/><path d="M576.3 251.8L579.0 249.4" stroke="#e89219"/><path d="M580.1 259.4L583.6 258.7" stroke="#e89219"/><path d="M579.6 267.9L583.0 269.0" stroke="#e89219"/><path d="M558.8 278.3L557.7 281.7" stroke="#e89219"/><path d="M572.4 272.1L574.9 275.0" stroke="#e79516"/><path d="M576.3 260.2L580.1 259.4" stroke="#e79516"/><path d="M573.4 254.3L576.3 251.8" stroke="#e79516"/><path d="M566.5 275.0L567.3 278.8" stroke="#e79516"/><path d="M576.0 266.7L579.6 267.9" stroke="#e79516"/><path d="M560.0 274.7L558.8 278.3" stroke="#e79516"/><path d="M565.8 271.3L566.5 275.0" stroke="#e79814"/><path d="M570.5 256.9L573.4 254.3" stroke="#e79814"/><path d="M569.8 269.2L572.4 272.1" stroke="#e79814"/><path d="M561.2 271.0L560.0 274.7" stroke="#e79814"/><path d="M572.3 265.5L576.0 266.7" stroke="#e79814"/><path d="M572.6 260.9L576.3 260.2" stroke="#e79814"/><path d="M567.9 259.3L570.5 256.9" stroke="#e79b12"/><path d="M565.0 267.8L565.8 271.3" stroke="#e79b12"/><path d="M562.4 267.6L561.2 271.0" stroke="#e79b12"/><path d="M567.4 266.6L569.8 269.2" stroke="#e79b12"/><path d="M569.1 261.7L572.6 260.9" stroke="#e79b12"/><path d="M568.9 264.3L572.3 265.5" stroke="#e79b12"/><path d="M565.6 261.3L567.9 259.3" stroke="#e69d10"/><path d="M566.1 262.3L569.1 261.7" stroke="#e69d10"/><path d="M565.4 264.3L567.4 266.6" stroke="#e69d10"/><path d="M564.4 264.8L565.0 267.8" stroke="#e69d10"/><path d="M563.3 264.8L562.4 267.6" stroke="#e69d10"/><path d="M566.1 263.4L568.9 264.3" stroke="#e69d10"/><path d="M564.0 262.7L565.6 261.3" stroke="#e69f0f"/><path d="M564.0 262.7L565.4 264.3" stroke="#e69f0f"/><path d="M564.0 262.7L566.1 262.3" stroke="#e69f0f"/><path d="M564.0 262.7L564.4 264.8" stroke="#e69f0f"/><path d="M564.0 262.7L566.1 263.4" stroke="#e69f0f"/><path d="M564.0 262.7L563.3 264.8" stroke="#e69f0f"/><path d="M564.0 262.7L564.7 260.6" stroke="#e2a40e"/><path d="M564.0 262.7L561.9 262.0" stroke="#e2a40e"/><path d="M564.0 262.7L563.6 260.6" stroke="#e2a40e"/><path d="M564.0 262.7L561.9 263.1" stroke="#e2a40e"/><path d="M564.0 262.7L562.6 261.1" stroke="#e2a40e"/><path d="M564.0 262.7L562.4 264.1" stroke="#e2a40e"/><path d="M561.9 262.0L559.1 261.1" stroke="#e1a50e"/><path d="M563.6 260.6L563.0 257.6" stroke="#e1a50e"/><path d="M564.7 260.6L565.6 257.8" stroke="#e1a50e"/><path d="M562.6 261.1L560.6 258.8" stroke="#e1a50e"/><path d="M561.9 263.1L558.9 263.7" stroke="#e1a50e"/><path d="M562.4 264.1L560.1 266.1" stroke="#e1a50e"/><path d="M558.9 263.7L555.4 264.5" stroke="#e1a60f"/><path d="M559.1 261.1L555.7 259.9" stroke="#e1a60f"/><path d="M563.0 257.6L562.2 254.1" stroke="#e1a60f"/><path d="M560.1 266.1L557.5 268.5" stroke="#e1a60f"/><path d="M560.6 258.8L558.2 256.2" stroke="#e1a60f"/><path d="M565.6 257.8L566.8 254.4" stroke="#e1a60f"/><path d="M555.4 264.5L551.7 265.2" stroke="#e0a80f"/><path d="M555.7 259.9L552.0 258.7" stroke="#e0a80f"/><path d="M557.5 268.5L554.6 271.1" stroke="#e0a80f"/><path d="M558.2 256.2L555.6 253.3" stroke="#e0a80f"/><path d="M562.2 254.1L561.5 250.4" stroke="#e0a80f"/><path d="M566.8 254.4L568.0 250.7" stroke="#e0a80f"/><path d="M554.6 271.1L551.7 273.6" stroke="#e0a910"/><path d="M551.7 265.2L547.9 266.0" stroke="#e0a910"/><path d="M552.0 258.7L548.4 257.5" stroke="#e0a910"/><path d="M561.5 250.4L560.7 246.6" stroke="#e0a910"/><path d="M555.6 253.3L553.1 250.4" stroke="#e0a910"/><path d="M568.0 250.7L569.2 247.1" stroke="#e0a910"/><path d="M551.7 273.6L549.0 276.0" stroke="#dfaa10"/><path d="M547.9 266.0L544.4 266.7" stroke="#dfaa10"/><path d="M548.4 257.5L545.0 256.4" stroke="#dfaa10"/><path d="M560.7 246.6L560.0 243.1" stroke="#dfaa10"/><path d="M569.2 247.1L570.3 243.7" stroke="#dfaa10"/><path d="M553.1 250.4L550.7 247.7" stroke="#dfaa10"/><path d="M549.0 276.0L546.4 278.2" stroke="#dfac11"/><path d="M570.3 243.7L571.5 240.5" stroke="#dfac11"/><path d="M560.0 243.1L559.4 239.7" stroke="#dfac11"/><path d="M544.4 266.7L541.0 267.3" stroke="#dfac11"/><path d="M550.7 247.7L548.5 245.1" stroke="#dfac11"/><path d="M545.0 256.4L541.8 255.2" stroke="#dfac11"/><path d="M546.4 278.2L543.7 280.6" stroke="#dead11"/><path d="M571.5 240.5L572.6 237.1" stroke="#dead11"/><path d="M559.4 239.7L558.7 236.2" stroke="#dead11"/><path d="M541.8 255.2L538.4 254.1" stroke="#dead11"/><path d="M548.5 245.1L546.1 242.4" stroke="#dead11"/><path d="M541.0 267.3L537.5 268.0" stroke="#dead11"/><path d="M543.7 280.6L541.1 282.9" stroke="#deae11"/><path d="M572.6 237.1L573.8 233.7" stroke="#deae11"/><path d="M558.7 236.2L558.0 232.7" stroke="#deae11"/><path d="M537.5 268.0L534.0 268.7" stroke="#deae11"/><path d="M538.4 254.1L535.0 252.9" stroke="#deae11"/><path d="M546.1 242.4L543.8 239.8" stroke="#deae11"/><path d="M558.0 232.7L557.4 229.4" stroke="#ddaf12"/><path d="M573.8 233.7L574.9 230.5" stroke="#ddaf12"/><path d="M543.8 239.8L541.6 237.1" stroke="#ddaf12"/><path d="M541.1 282.9L538.4 285.1" stroke="#ddaf12"/><path d="M534.0 268.7L530.7 269.3" stroke="#ddaf12"/><path d="M535.0 252.9L531.8 251.8" stroke="#ddaf12"/><path d="M557.4 229.4L556.8 226.2" stroke="#dbaf12"/><path d="M574.9 230.5L576.0 227.5" stroke="#dbaf12"/><path d="M541.6 237.1L539.5 234.7" stroke="#dbaf12"/><path d="M530.7 269.3L527.5 269.9" stroke="#dbaf12"/><path d="M538.4 285.1L536.0 287.2" stroke="#dbaf12"/><path d="M531.8 251.8L528.8 250.7" stroke="#dbaf12"/><path d="M576.0 227.5L577.0 224.9" stroke="#d6ae13"/><path d="M556.8 226.2L556.4 223.4" stroke="#d6ae13"/><path d="M539.5 234.7L537.8 232.5" stroke="#d6ae13"/><path d="M527.5 269.9L524.7 270.3" stroke="#d6ae13"/><path d="M536.0 287.2L533.8 288.9" stroke="#d6ae13"/><path d="M528.8 250.7L526.2 249.7" stroke="#d6ae13"/><path d="M533.8 288.9L531.9 290.3" stroke="#d2ad14"/><path d="M526.2 249.7L524.0 248.8" stroke="#d2ad14"/><path d="M556.4 223.4L556.1 221.1" stroke="#d2ad14"/><path d="M577.0 224.9L577.9 222.7" stroke="#d2ad14"/><path d="M537.8 232.5L536.4 230.6" stroke="#d2ad14"/><path d="M524.7 270.3L522.4 270.6" stroke="#d2ad14"/><path d="M577.9 222.7L578.8 221.0" stroke="#cfac15"/><path d="M524.0 248.8L522.3 247.9" stroke="#cfac15"/><path d="M531.9 290.3L530.3 291.4" stroke="#cfac15"/><path d="M556.1 221.1L555.9 219.2" stroke="#cfac15"/><path d="M536.4 230.6L535.3 229.0" stroke="#cfac15"/><path d="M522.4 270.6L520.5 270.8" stroke="#cfac15"/><path d="M522.3 247.9L520.8 247.1" stroke="#ccac15"/><path d="M578.8 221.0L579.6 219.5" stroke="#ccac15"/><path d="M520.5 270.8L518.8 270.8" stroke="#ccac15"/><path d="M555.9 219.2L555.9 217.5" stroke="#ccac15"/><path d="M530.3 291.4L528.9 292.4" stroke="#ccac15"/><path d="M535.3 229.0L534.3 227.6" stroke="#ccac15"/><path d="M520.8 247.1L519.4 246.4" stroke="#c9ab16"/><path d="M518.8 270.8L517.2 270.9" stroke="#c9ab16"/><path d="M534.3 227.6L533.5 226.3" stroke="#c9ab16"/><path d="M579.6 219.5L580.3 218.1" stroke="#c9ab16"/><path d="M555.9 217.5L555.8 215.9" stroke="#c9ab16"/><path d="M528.9 292.4L527.6 293.2" stroke="#c9ab16"/><path d="M533.5 226.3L532.6 224.9" stroke="#c6ab16"/><path d="M517.2 270.9L515.5 271.0" stroke="#c6ab16"/><path d="M580.3 218.1L581.1 216.6" stroke="#c6ab16"/><path d="M555.8 215.9L555.7 214.2" stroke="#c6ab16"/><path d="M519.4 246.4L517.9 245.6" stroke="#c6ab16"/><path d="M527.6 293.2L526.2 294.1" stroke="#c6ab16"/><path d="M532.6 224.9L531.6 223.3" stroke="#c4aa17"/><path d="M515.5 271.0L513.7 271.1" stroke="#c4aa17"/><path d="M581.1 216.6L581.9 214.9" stroke="#c4aa17"/><path d="M555.7 214.2L555.6 212.4" stroke="#c4aa17"/><path d="M526.2 294.1L524.6 295.1" stroke="#c4aa17"/><path d="M517.9 245.6L516.2 244.8" stroke="#c4aa17"/><path d="M516.2 244.8L514.3 244.0" stroke="#c0a917"/><path d="M513.7 271.1L511.6 271.4" stroke="#c0a917"/><path d="M581.9 214.9L582.7 213.0" stroke="#c0a917"/><path d="M531.6 223.3L530.3 221.7" stroke="#c0a917"/><path d="M555.6 212.4L555.3 210.3" stroke="#c0a917"/><path d="M524.6 295.1L523.0 296.4" stroke="#c0a917"/><path d="M511.6 271.4L509.5 271.7" stroke="#bda818"/><path d="M514.3 244.0L512.3 243.2" stroke="#bda818"/><path d="M523.0 296.4L521.3 297.7" stroke="#bda818"/><path d="M582.7 213.0L583.5 211.0" stroke="#bda818"/><path d="M555.3 210.3L555.0 208.2" stroke="#bda818"/><path d="M530.3 221.7L529.0 220.0" stroke="#bda818"/><path d="M521.3 297.7L519.6 299.1" stroke="#b6a619"/><path d="M509.5 271.7L507.3 272.0" stroke="#b6a619"/><path d="M555.0 208.2L554.7 206.0" stroke="#b6a619"/><path d="M512.3 243.2L510.3 242.4" stroke="#b6a619"/><path d="M583.5 211.0L584.3 209.0" stroke="#b6a619"/><path d="M529.0 220.0L527.6 218.3" stroke="#b6a619"/><path d="M507.3 272.0L505.1 272.3" stroke="#aea41b"/><path d="M519.6 299.1L517.8 300.5" stroke="#aea41b"/><path d="M554.7 206.0L554.4 203.8" stroke="#aea41b"/><path d="M527.6 218.3L526.2 216.5" stroke="#aea41b"/><path d="M510.3 242.4L508.2 241.6" stroke="#aea41b"/><path d="M584.3 209.0L585.1 206.9" stroke="#aea41b"/><path d="M505.1 272.3L502.9 272.7" stroke="#a5a21c"/><path d="M517.8 300.5L516.1 301.9" stroke="#a5a21c"/><path d="M554.4 203.8L554.0 201.6" stroke="#a5a21c"/><path d="M526.2 216.5L524.8 214.8" stroke="#a5a21c"/><path d="M508.2 241.6L506.1 240.8" stroke="#a5a21c"/><path d="M585.1 206.9L585.9 204.8" stroke="#a5a21c"/><path d="M502.9 272.7L500.8 272.9" stroke="#9da01e"/><path d="M516.1 301.9L514.4 303.1" stroke="#9da01e"/><path d="M585.9 204.8L586.7 202.9" stroke="#9da01e"/><path d="M554.0 201.6L553.8 199.5" stroke="#9da01e"/><path d="M506.1 240.8L504.2 240.0" stroke="#9da01e"/><path d="M524.8 214.8L523.6 213.1" stroke="#9da01e"/><path d="M514.4 303.1L512.7 304.4" stroke="#959e1f"/><path d="M500.8 272.9L498.7 273.2" stroke="#959e1f"/><path d="M586.7 202.9L587.6 201.0" stroke="#959e1f"/><path d="M553.8 199.5L553.5 197.4" stroke="#959e1f"/><path d="M523.6 213.1L522.3 211.4" stroke="#959e1f"/><path d="M504.2 240.0L502.3 239.1" stroke="#959e1f"/><path d="M512.7 304.4L511.0 305.6" stroke="#8d9c21"/><path d="M498.7 273.2L496.7 273.4" stroke="#8d9c21"/><path d="M587.6 201.0L588.4 199.0" stroke="#8d9c21"/><path d="M553.5 197.4L553.3 195.4" stroke="#8d9c21"/><path d="M502.3 239.1L500.3 238.3" stroke="#8d9c21"/><path d="M522.3 211.4L521.1 209.7" stroke="#8d9c21"/><path d="M500.3 238.3L498.5 237.4" stroke="#869a23"/><path d="M496.7 273.4L494.6 273.6" stroke="#869a23"/><path d="M511.0 305.6L509.3 306.8" stroke="#869a23"/><path d="M588.4 199.0L589.3 197.2" stroke="#869a23"/><path d="M553.3 195.4L553.1 193.3" stroke="#869a23"/><path d="M521.1 209.7L519.9 208.0" stroke="#869a23"/><path d="M498.5 237.4L496.6 236.5" stroke="#7e9824"/><path d="M509.3 306.8L507.7 307.9" stroke="#7e9824"/><path d="M494.6 273.6L492.6 273.7" stroke="#7e9824"/><path d="M553.1 193.3L553.0 191.3" stroke="#7e9824"/><path d="M589.3 197.2L590.2 195.3" stroke="#7e9824"/><path d="M519.9 208.0L518.8 206.4" stroke="#7e9824"/><path d="M496.6 236.5L494.9 235.7" stroke="#779624"/><path d="M507.7 307.9L506.1 309.0" stroke="#779624"/><path d="M590.2 195.3L591.0 193.6" stroke="#779624"/><path d="M553.0 191.3L552.9 189.4" stroke="#779624"/><path d="M492.6 273.7L490.7 273.8" stroke="#779624"/><path d="M518.8 206.4L517.7 204.8" stroke="#779624"/><path d="M494.9 235.7L493.3 234.8" stroke="#709323"/><path d="M506.1 309.0L504.5 310.0" stroke="#709323"/><path d="M591.0 193.6L591.9 192.0" stroke="#709323"/><path d="M490.7 273.8L488.8 273.9" stroke="#709323"/><path d="M552.9 189.4L552.8 187.5" stroke="#709323"/><path d="M517.7 204.8L516.7 203.2" stroke="#709323"/><path d="M488.8 273.9L487.1 274.0" stroke="#6a9123"/><path d="M493.3 234.8L491.8 234.0" stroke="#6a9123"/><path d="M504.5 310.0L503.1 310.9" stroke="#6a9123"/><path d="M591.9 192.0L592.7 190.5" stroke="#6a9123"/><path d="M516.7 203.2L515.8 201.8" stroke="#6a9123"/><path d="M552.8 187.5L552.7 185.8" stroke="#6a9123"/><path d="M487.1 274.0L485.4 274.0" stroke="#648f23"/><path d="M491.8 234.0L490.3 233.2" stroke="#648f23"/><path d="M503.1 310.9L501.6 311.8" stroke="#648f23"/><path d="M592.7 190.5L593.5 189.0" stroke="#648f23"/><path d="M515.8 201.8L514.9 200.3" stroke="#648f23"/><path d="M552.7 185.8L552.7 184.1" stroke="#648f23"/><path d="M485.4 274.0L483.9 274.1" stroke="#5f8e23"/><path d="M490.3 233.2L488.9 232.5" stroke="#5f8e23"/><path d="M514.9 200.3L514.1 199.0" stroke="#5f8e23"/><path d="M593.5 189.0L594.2 187.6" stroke="#5f8e23"/><path d="M552.7 184.1L552.6 182.6" stroke="#5f8e23"/><path d="M501.6 311.8L500.3 312.6" stroke="#5f8e23"/><path d="M483.9 274.1L482.4 274.0" stroke="#598c22"/><path d="M594.2 187.6L595.0 186.3" stroke="#598c22"/><path d="M514.1 199.0L513.4 197.7" stroke="#598c22"/><path d="M500.3 312.6L499.0 313.3" stroke="#598c22"/><path d="M552.6 182.6L552.7 181.1" stroke="#598c22"/><path d="M488.9 232.5L487.6 231.7" stroke="#598c22"/><path d="M482.4 274.0L481.0 273.9" stroke="#548a22"/><path d="M499.0 313.3L497.7 313.9" stroke="#548a22"/><path d="M595.0 186.3L595.8 185.2" stroke="#548a22"/><path d="M513.4 197.7L512.8 196.4" stroke="#548a22"/><path d="M552.7 181.1L552.8 179.7" stroke="#548a22"/><path d="M487.6 231.7L486.5 230.9" stroke="#548a22"/><path d="M497.7 313.9L496.6 314.4" stroke="#508922"/><path d="M481.0 273.9L479.7 273.8" stroke="#508922"/><path d="M595.8 185.2L596.5 184.2" stroke="#508922"/><path d="M486.5 230.9L485.5 230.2" stroke="#508922"/><path d="M552.8 179.7L552.9 178.4" stroke="#508922"/><path d="M512.8 196.4L512.3 195.3" stroke="#508922"/><path d="M596.5 184.2L597.3 183.3" stroke="#518b2d"/><path d="M496.6 314.4L495.5 314.8" stroke="#518b2d"/><path d="M485.5 230.2L484.6 229.4" stroke="#518b2d"/><path d="M479.7 273.8L478.6 273.6" stroke="#518b2d"/><path d="M552.9 178.4L553.1 177.3" stroke="#518b2d"/><path d="M512.3 195.3L511.9 194.2" stroke="#518b2d"/><path d="M597.3 183.3L597.9 182.6" stroke="#558f3d"/><path d="M484.6 229.4L483.9 228.8" stroke="#558f3d"/><path d="M495.5 314.8L494.5 315.1" stroke="#558f3d"/><path d="M478.6 273.6L477.6 273.4" stroke="#558f3d"/><path d="M553.1 177.3L553.3 176.3" stroke="#558f3d"/><path d="M511.9 194.2L511.6 193.2" stroke="#558f3d"/><path d="M477.6 273.4L476.7 273.1" stroke="#59934b"/><path d="M494.5 315.1L493.6 315.3" stroke="#59934b"/><path d="M597.9 182.6L598.6 181.9" stroke="#59934b"/><path d="M483.9 228.8L483.2 228.1" stroke="#59934b"/><path d="M511.6 193.2L511.4 192.3" stroke="#59934b"/><path d="M553.3 176.3L553.6 175.4" stroke="#59934b"/><path d="M493.6 315.3L492.8 315.4" stroke="#5d9759"/><path d="M476.7 273.1L475.9 272.8" stroke="#5d9759"/><path d="M598.6 181.9L599.3 181.4" stroke="#5d9759"/><path d="M553.6 175.4L553.9 174.6" stroke="#5d9759"/><path d="M511.4 192.3L511.3 191.5" stroke="#5d9759"/><path d="M483.2 228.1L482.7 227.4" stroke="#5d9759"/><path d="M599.3 181.4L600.1 181.0" stroke="#609a66"/><path d="M553.9 174.6L554.4 173.9" stroke="#609a66"/><path d="M475.9 272.8L475.2 272.3" stroke="#609a66"/><path d="M492.8 315.4L491.9 315.4" stroke="#609a66"/><path d="M511.3 191.5L511.3 190.6" stroke="#609a66"/><path d="M482.7 227.4L482.3 226.6" stroke="#609a66"/><path d="M600.1 181.0L600.9 180.6" stroke="#649e73"/><path d="M554.4 173.9L554.9 173.2" stroke="#649e73"/><path d="M475.2 272.3L474.5 271.8" stroke="#649e73"/><path d="M491.9 315.4L491.0 315.3" stroke="#649e73"/><path d="M511.3 190.6L511.4 189.7" stroke="#649e73"/><path d="M482.3 226.6L481.9 225.8" stroke="#649e73"/><path d="M474.5 271.8L473.8 271.2" stroke="#68a280"/><path d="M481.9 225.8L481.6 224.9" stroke="#68a280"/><path d="M554.9 173.2L555.5 172.5" stroke="#68a280"/><path d="M511.4 189.7L511.6 188.8" stroke="#68a280"/><path d="M491.0 315.3L490.1 315.1" stroke="#68a280"/><path d="M600.9 180.6L601.8 180.3" stroke="#68a280"/><path d="M473.8 271.2L473.1 270.4" stroke="#6ba58e"/><path d="M555.5 172.5L556.3 171.8" stroke="#6ba58e"/><path d="M511.6 188.8L511.9 187.8" stroke="#6ba58e"/><path d="M481.6 224.9L481.4 223.9" stroke="#6ba58e"/><path d="M490.1 315.1L489.1 314.8" stroke="#6ba58e"/><path d="M601.8 180.3L602.8 180.1" stroke="#6ba58e"/><path d="M556.3 171.8L557.1 171.2" stroke="#6fa99d"/><path d="M473.1 270.4L472.5 269.6" stroke="#6fa99d"/><path d="M511.9 187.8L512.3 186.9" stroke="#6fa99d"/><path d="M602.8 180.1L603.8 180.0" stroke="#6fa99d"/><path d="M489.1 314.8L488.2 314.4" stroke="#6fa99d"/><path d="M481.4 223.9L481.3 222.9" stroke="#6fa99d"/><path d="M472.5 269.6L472.0 268.7" stroke="#74aeac"/><path d="M603.8 180.0L604.8 180.0" stroke="#74aeac"/><path d="M512.3 186.9L512.8 186.0" stroke="#74aeac"/><path d="M557.1 171.2L558.0 170.7" stroke="#74aeac"/><path d="M481.3 222.9L481.3 221.9" stroke="#74aeac"/><path d="M488.2 314.4L487.3 313.9" stroke="#74aeac"/><path d="M472.0 268.7L471.5 267.8" stroke="#78b2bc"/><path d="M558.0 170.7L558.9 170.2" stroke="#78b2bc"/><path d="M481.3 221.9L481.3 220.8" stroke="#78b2bc"/><path d="M512.8 186.0L513.4 185.1" stroke="#78b2bc"/><path d="M604.8 180.0L605.9 180.0" stroke="#78b2bc"/><path d="M487.3 313.9L486.4 313.3" stroke="#78b2bc"/><path d="M471.5 267.8L471.1 266.8" stroke="#7ab5c5"/><path d="M558.9 170.2L559.9 169.8" stroke="#7ab5c5"/><path d="M513.4 185.1L514.0 184.3" stroke="#7ab5c5"/><path d="M481.3 220.8L481.5 219.8" stroke="#7ab5c5"/><path d="M486.4 313.3L485.6 312.7" stroke="#7ab5c5"/><path d="M605.9 180.0L606.9 180.2" stroke="#7ab5c5"/><path d="M471.1 266.8L470.8 265.7" stroke="#7ab6c7"/><path d="M485.6 312.7L484.8 311.9" stroke="#7ab6c7"/><path d="M606.9 180.2L608.0 180.5" stroke="#7ab6c7"/><path d="M514.0 184.3L514.8 183.5" stroke="#7ab6c7"/><path d="M481.5 219.8L481.8 218.7" stroke="#7ab6c7"/><path d="M559.9 169.8L561.0 169.5" stroke="#7ab6c7"/><path d="M608.0 180.5L609.2 180.9" stroke="#79b7c9"/><path d="M514.8 183.5L515.7 182.7" stroke="#79b7c9"/><path d="M470.8 265.7L470.6 264.5" stroke="#79b7c9"/><path d="M484.8 311.9L484.0 311.0" stroke="#79b7c9"/><path d="M481.8 218.7L482.2 217.5" stroke="#79b7c9"/><path d="M561.0 169.5L562.2 169.3" stroke="#79b7c9"/><path d="M515.7 182.7L516.7 181.9" stroke="#79b8cc"/><path d="M609.2 180.9L610.3 181.4" stroke="#79b8cc"/><path d="M484.0 311.0L483.2 310.0" stroke="#79b8cc"/><path d="M482.2 217.5L482.7 216.4" stroke="#79b8cc"/><path d="M470.6 264.5L470.4 263.2" stroke="#79b8cc"/><path d="M562.2 169.3L563.5 169.1" stroke="#79b8cc"/><path d="M516.7 181.9L517.8 181.2" stroke="#79b9ce"/><path d="M610.3 181.4L611.5 181.9" stroke="#79b9ce"/><path d="M483.2 310.0L482.5 308.9" stroke="#79b9ce"/><path d="M470.4 263.2L470.3 262.0" stroke="#79b9ce"/><path d="M482.7 216.4L483.2 215.2" stroke="#79b9ce"/><path d="M563.5 169.1L564.7 169.0" stroke="#79b9ce"/><path d="M611.5 181.9L612.6 182.5" stroke="#78bad1"/><path d="M517.8 181.2L518.9 180.5" stroke="#78bad1"/><path d="M482.5 308.9L481.8 307.8" stroke="#78bad1"/><path d="M564.7 169.0L566.0 169.0" stroke="#78bad1"/><path d="M483.2 215.2L483.8 214.1" stroke="#78bad1"/><path d="M470.3 262.0L470.3 260.7" stroke="#78bad1"/><path d="M612.6 182.5L613.7 183.2" stroke="#78bcd3"/><path d="M481.8 307.8L481.2 306.7" stroke="#78bcd3"/><path d="M566.0 169.0L567.3 169.0" stroke="#78bcd3"/><path d="M518.9 180.5L520.0 179.9" stroke="#78bcd3"/><path d="M483.8 214.1L484.5 213.0" stroke="#78bcd3"/><path d="M470.3 260.7L470.3 259.4" stroke="#78bcd3"/><path d="M613.7 183.2L614.7 183.8" stroke="#74b9d3"/><path d="M470.3 259.4L470.3 258.2" stroke="#74b9d3"/><path d="M481.2 306.7L480.6 305.7" stroke="#74b9d3"/><path d="M520.0 179.9L521.0 179.3" stroke="#74b9d3"/><path d="M484.5 213.0L485.1 212.0" stroke="#74b9d3"/><path d="M567.3 169.0L568.5 169.0" stroke="#74b9d3"/><path d="M614.7 183.8L615.7 184.4" stroke="#6fb4d2"/><path d="M568.5 169.0L569.6 169.1" stroke="#6fb4d2"/><path d="M470.3 258.2L470.4 257.1" stroke="#6fb4d2"/><path d="M480.6 305.7L480.1 304.6" stroke="#6fb4d2"/><path d="M521.0 179.3L522.1 178.8" stroke="#6fb4d2"/><path d="M485.1 212.0L485.7 211.0" stroke="#6fb4d2"/><path d="M569.6 169.1L570.8 169.2" stroke="#6aafd1"/><path d="M615.7 184.4L616.6 185.1" stroke="#6aafd1"/><path d="M480.1 304.6L479.6 303.6" stroke="#6aafd1"/><path d="M470.4 257.1L470.5 255.9" stroke="#6aafd1"/><path d="M522.1 178.8L523.1 178.3" stroke="#6aafd1"/><path d="M485.7 211.0L486.4 210.1" stroke="#6aafd1"/><path d="M479.6 303.6L479.2 302.4" stroke="#64abd0"/><path d="M523.1 178.3L524.3 177.9" stroke="#64abd0"/><path d="M470.5 255.9L470.7 254.7" stroke="#64abd0"/><path d="M570.8 169.2L572.0 169.4" stroke="#64abd0"/><path d="M486.4 210.1L487.2 209.1" stroke="#64abd0"/><path d="M616.6 185.1L617.6 185.9" stroke="#64abd0"/><path d="M572.0 169.4L573.2 169.7" stroke="#5fa6ce"/><path d="M524.3 177.9L525.5 177.5" stroke="#5fa6ce"/><path d="M470.7 254.7L471.0 253.5" stroke="#5fa6ce"/><path d="M479.2 302.4L478.8 301.2" stroke="#5fa6ce"/><path d="M617.6 185.9L618.5 186.7" stroke="#5fa6ce"/><path d="M487.2 209.1L488.0 208.2" stroke="#5fa6ce"/><path d="M573.2 169.7L574.6 170.0" stroke="#59a1cd"/><path d="M525.5 177.5L526.8 177.1" stroke="#59a1cd"/><path d="M471.0 253.5L471.3 252.1" stroke="#59a1cd"/><path d="M478.8 301.2L478.4 299.9" stroke="#59a1cd"/><path d="M618.5 186.7L619.5 187.7" stroke="#59a1cd"/><path d="M488.0 208.2L489.0 207.2" stroke="#59a1cd"/><path d="M574.6 170.0L576.0 170.5" stroke="#529bcb"/><path d="M471.3 252.1L471.8 250.7" stroke="#529bcb"/><path d="M619.5 187.7L620.5 188.8" stroke="#529bcb"/><path d="M526.8 177.1L528.3 176.8" stroke="#529bcb"/><path d="M489.0 207.2L490.1 206.2" stroke="#529bcb"/><path d="M478.4 299.9L478.1 298.4" stroke="#529bcb"/><path d="M576.0 170.5L577.5 171.0" stroke="#4b95ca"/><path d="M471.8 250.7L472.3 249.2" stroke="#4b95ca"/><path d="M490.1 206.2L491.4 205.1" stroke="#4b95ca"/><path d="M478.1 298.4L477.8 296.8" stroke="#4b95ca"/><path d="M620.5 188.8L621.6 190.1" stroke="#4b95ca"/><path d="M528.3 176.8L529.9 176.5" stroke="#4b95ca"/><path d="M472.3 249.2L472.9 247.6" stroke="#438ec8"/><path d="M577.5 171.0L579.1 171.6" stroke="#438ec8"/><path d="M491.4 205.1L492.7 204.1" stroke="#438ec8"/><path d="M477.8 296.8L477.6 295.1" stroke="#438ec8"/><path d="M529.9 176.5L531.6 176.3" stroke="#438ec8"/><path d="M621.6 190.1L622.6 191.4" stroke="#438ec8"/><path d="M472.9 247.6L473.6 246.0" stroke="#3c87c6"/><path d="M579.1 171.6L580.7 172.3" stroke="#3c87c6"/><path d="M531.6 176.3L533.3 176.0" stroke="#3c87c6"/><path d="M492.7 204.1L494.1 203.0" stroke="#3c87c6"/><path d="M477.6 295.1L477.3 293.4" stroke="#3c87c6"/><path d="M622.6 191.4L623.7 192.8" stroke="#3c87c6"/><path d="M580.7 172.3L582.3 173.0" stroke="#3784c5"/><path d="M473.6 246.0L474.3 244.4" stroke="#3784c5"/><path d="M533.3 176.0L535.0 175.9" stroke="#3784c5"/><path d="M494.1 203.0L495.4 202.0" stroke="#3784c5"/><path d="M623.7 192.8L624.7 194.1" stroke="#3784c5"/><path d="M477.3 293.4L477.2 291.7" stroke="#3784c5"/><path d="M582.3 173.0L583.7 173.7" stroke="#3481c4"/><path d="M474.3 244.4L475.0 243.0" stroke="#3481c4"/><path d="M535.0 175.9L536.6 175.7" stroke="#3481c4"/><path d="M495.4 202.0L496.8 201.1" stroke="#3481c4"/><path d="M624.7 194.1L625.6 195.5" stroke="#3481c4"/><path d="M477.2 291.7L477.0 290.1" stroke="#3481c4"/><path d="M475.0 243.0L475.7 241.6" stroke="#317ec3"/><path d="M625.6 195.5L626.5 196.8" stroke="#317ec3"/><path d="M583.7 173.7L585.1 174.4" stroke="#317ec3"/><path d="M536.6 175.7L538.1 175.6" stroke="#317ec3"/><path d="M496.8 201.1L498.1 200.2" stroke="#317ec3"/><path d="M477.0 290.1L476.9 288.6" stroke="#317ec3"/><path d="M475.7 241.6L476.4 240.2" stroke="#2e7cc2"/><path d="M585.1 174.4L586.5 175.1" stroke="#2e7cc2"/><path d="M626.5 196.8L627.3 198.1" stroke="#2e7cc2"/><path d="M476.9 288.6L476.9 287.0" stroke="#2e7cc2"/><path d="M538.1 175.6L539.7 175.6" stroke="#2e7cc2"/><path d="M498.1 200.2L499.4 199.4" stroke="#2e7cc2"/><path d="M476.4 240.2L477.1 238.8" stroke="#2b79c0"/><path d="M627.3 198.1L628.1 199.4" stroke="#2b79c0"/><path d="M476.9 287.0L476.8 285.5" stroke="#2b79c0"/><path d="M586.5 175.1L587.9 175.8" stroke="#2b79c0"/><path d="M539.7 175.6L541.2 175.5" stroke="#2b79c0"/><path d="M499.4 199.4L500.7 198.6" stroke="#2b79c0"/><path d="M628.1 199.4L628.8 200.7" stroke="#2877bf"/><path d="M587.9 175.8L589.2 176.6" stroke="#2877bf"/><path d="M477.1 238.8L477.9 237.5" stroke="#2877bf"/><path d="M476.8 285.5L476.8 284.0" stroke="#2877bf"/><path d="M500.7 198.6L502.0 197.9" stroke="#2877bf"/><path d="M541.2 175.5L542.7 175.5" stroke="#2877bf"/><path d="M589.2 176.6L590.4 177.3" stroke="#2574be"/><path d="M477.9 237.5L478.6 236.3" stroke="#2574be"/><path d="M628.8 200.7L629.5 202.0" stroke="#2574be"/><path d="M502.0 197.9L503.3 197.2" stroke="#2574be"/><path d="M476.8 284.0L476.9 282.5" stroke="#2574be"/><path d="M542.7 175.5L544.2 175.6" stroke="#2574be"/><path d="M478.6 236.3L479.4 235.2" stroke="#2272bd"/><path d="M629.5 202.0L630.1 203.1" stroke="#2272bd"/><path d="M590.4 177.3L591.5 178.1" stroke="#2272bd"/><path d="M476.9 282.5L476.9 281.2" stroke="#2272bd"/><path d="M503.3 197.2L504.4 196.6" stroke="#2272bd"/><path d="M544.2 175.6L545.5 175.6" stroke="#2272bd"/><path d="M630.1 203.1L630.7 204.3" stroke="#2070bc"/><path d="M479.4 235.2L480.1 234.1" stroke="#2070bc"/><path d="M476.9 281.2L477.0 279.9" stroke="#2070bc"/><path d="M545.5 175.6L546.8 175.7" stroke="#2070bc"/><path d="M504.4 196.6L505.6 196.0" stroke="#2070bc"/><path d="M591.5 178.1L592.6 178.8" stroke="#2070bc"/><path d="M630.7 204.3L631.2 205.5" stroke="#1d6ebb"/><path d="M546.8 175.7L548.1 175.9" stroke="#1d6ebb"/><path d="M505.6 196.0L506.8 195.5" stroke="#1d6ebb"/><path d="M477.0 279.9L477.2 278.6" stroke="#1d6ebb"/><path d="M480.1 234.1L480.9 233.1" stroke="#1d6ebb"/><path d="M592.6 178.8L593.6 179.6" stroke="#1d6ebb"/><path d="M631.2 205.5L631.6 206.6" stroke="#1b6bba"/><path d="M506.8 195.5L507.9 195.1" stroke="#1b6bba"/><path d="M548.1 175.9L549.3 176.1" stroke="#1b6bba"/><path d="M477.2 278.6L477.4 277.4" stroke="#1b6bba"/><path d="M480.9 233.1L481.6 232.2" stroke="#1b6bba"/><path d="M593.6 179.6L594.5 180.3" stroke="#1b6bba"/><path d="M631.6 206.6L632.0 207.6" stroke="#186aba"/><path d="M594.5 180.3L595.4 181.0" stroke="#186aba"/><path d="M507.9 195.1L508.9 194.7" stroke="#186aba"/><path d="M477.4 277.4L477.6 276.4" stroke="#186aba"/><path d="M481.6 232.2L482.3 231.3" stroke="#186aba"/><path d="M549.3 176.1L550.3 176.3" stroke="#186aba"/><path d="M595.4 181.0L596.1 181.6" stroke="#1668b9"/><path d="M632.0 207.6L632.3 208.5" stroke="#1668b9"/><path d="M550.3 176.3L551.2 176.4" stroke="#1668b9"/><path d="M508.9 194.7L509.8 194.4" stroke="#1668b9"/><path d="M477.6 276.4L477.7 275.5" stroke="#1668b9"/><path d="M482.3 231.3L482.9 230.6" stroke="#1668b9"/><path d="M632.3 208.5L632.6 209.1" stroke="#1567b8"/><path d="M596.1 181.6L596.6 182.0" stroke="#1567b8"/><path d="M551.2 176.4L551.9 176.5" stroke="#1567b8"/><path d="M509.8 194.4L510.4 194.1" stroke="#1567b8"/><path d="M477.7 275.5L477.8 274.8" stroke="#1567b8"/><path d="M482.9 230.6L483.3 230.1" stroke="#1567b8"/></g><g font-family="Liberation Sans" font-size="9.7" fill="#111"><rect x="310" y="259" width="1" height="8" fill="#555"/><text x="310" y="260">-7</text><rect x="346" y="259" width="1" height="8" fill="#555"/><text x="346" y="260">-6</text><rect x="383" y="259" width="1" height="8" fill="#555"/><text x="383" y="260">-5</text><rect x="419" y="259" width="1" height="8" fill="#555"/><text x="419" y="260">-4</text><rect x="455" y="259" width="1" height="8" fill="#555"/><text x="455" y="260">-3</text><rect x="491" y="259" width="1" height="8" fill="#555"/><text x="491" y="260">-2</text><rect x="527" y="259" width="1" height="8" fill="#555"/><text x="527" y="260">-1</text><rect x="600" y="259" width="1" height="8" fill="#3838ff"/><text x="600" y="260">1</text><rect x="636" y="259" width="1" height="8" fill="#3838ff"/><text x="636" y="260">2</text><rect x="672" y="259" width="1" height="8" fill="#3838ff"/><text x="672" y="260">3</text><rect x="708" y="259" width="1" height="8" fill="#3838ff"/><text x="708" y="260">4</text><rect x="745" y="259" width="1" height="8" fill="#3838ff"/><text x="745" y="260">5</text><rect x="781" y="259" width="1" height="8" fill="#3838ff"/><text x="781" y="260">6</text><rect x="817" y="259" width="1" height="8" fill="#3838ff"/><text x="817" y="260">7</text><rect x="560" y="443" width="8" height="1" fill="#555"/><text x="568" y="443.5">-5</text><rect x="560" y="407" width="8" height="1" fill="#555"/><text x="568" y="407.5">-4</text><rect x="560" y="371" width="8" height="1" fill="#555"/><text x="568" y="371.5">-3</text><rect x="560" y="335" width="8" height="1" fill="#555"/><text x="568" y="335.5">-2</text><rect x="560" y="299" width="8" height="1" fill="#555"/><text x="568" y="299.5">-1</text><rect x="560" y="226" width="8" height="1" fill="#ff5050"/><text x="568" y="226.5">1</text><rect x="560" y="190" width="8" height="1" fill="#ff5050"/><text x="568" y="190.5">2</text><rect x="560" y="154" width="8" height="1" fill="#ff5050"/><text x="568" y="154.5">3</text><rect x="560" y="118" width="8" height="1" fill="#ff5050"/><text x="568" y="118.5">4</text><rect x="560" y="82" width="8" height="1" fill="#ff5050"/><text x="568" y="82.5">5</text></g></g></svg>
</body></html>
